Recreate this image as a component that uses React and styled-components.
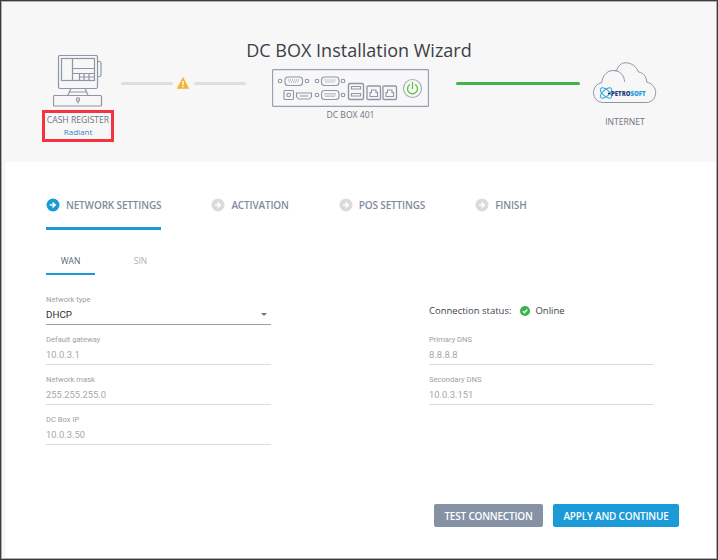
import React from "react";
import styled, { createGlobalStyle } from "styled-components";

const GlobalStyle = createGlobalStyle`
	html, body {
		margin: 0;
		padding: 0;
		background: #fff;
	}
	body {
		font-family: "Open Sans", "Liberation Sans", sans-serif;
	}
`;

const Frame = styled.div`
	box-sizing: border-box;
	width: 718px;
	height: 560px;
	border: 1px solid #3c3c3c;
	overflow: hidden;
`;

const Window = styled.div`
	box-sizing: border-box;
	height: 100%;
	border: 1px solid #adadad;
	display: flex;
	flex-direction: column;
	background: #f7f7f7;
`;

const Header = styled.header`
	height: 160px;
	flex: none;
`;

const Title = styled.h1`
	margin: 0;
	padding-top: 36px;
	font-size: 18px;
	line-height: 25px;
	font-weight: 400;
	color: #3a3f47;
	text-align: center;
`;

// the row of devices starts a little above the bottom of the title
const Devices = styled.div`
	display: flex;
	align-items: flex-start;
	margin-top: -8px;
	padding-left: 40px;
`;

const Device = styled.div`
	display: flex;
	flex-direction: column;
	align-items: center;
	flex: none;
	width: ${(p) => p.$width}px;
	margin-left: ${(p) => p.$left || 0}px;
	margin-top: ${(p) => p.$top || 0}px;
	svg {
		display: block;
		flex: none;
	}
`;

const DeviceName = styled.div`
	font-size: 8.6px;
	line-height: 12px;
	color: #6d7480;
	margin-top: ${(p) => p.$top || 0}px;
	white-space: nowrap;
`;

const SubName = styled.div`
	font-size: 8px;
	line-height: 12px;
	color: #3f82c0;
`;

const Highlight = styled.div`
	box-sizing: border-box;
	width: 72px;
	height: 32px;
	margin-top: 3px;
	border: 3px solid #f5333f;
	display: flex;
	flex-direction: column;
	align-items: center;
	justify-content: center;
`;

const LinkRow = styled.div`
	display: flex;
	align-items: center;
	flex: none;
	gap: 4px;
	width: ${(p) => p.$width}px;
	height: 12px;
	margin-left: ${(p) => p.$left}px;
	margin-top: 22px;
`;

const Line = styled.div`
	flex: 1;
	height: 3px;
	border-radius: 2px;
	background: ${(p) => p.$color};
`;

const WarnSlot = styled.span`
	display: flex;
	margin-right: 1px;
`;

const Body = styled.main`
	flex: 1;
	margin-left: 4px;
	padding: 0 37px 0 40px;
	background: #fff;
	display: flex;
	flex-direction: column;
`;

const Steps = styled.div`
	display: flex;
	gap: 50px;
`;

const Step = styled.div`
	display: flex;
	align-items: flex-start;
	gap: 6px;
	box-sizing: border-box;
	height: 68px;
	padding-top: 36px;
	border-bottom: 3px solid ${(p) => (p.$active ? "#1a9bd8" : "transparent")};
	svg {
		flex: none;
	}
`;

const StepLabel = styled.span`
	font-size: 10px;
	font-weight: 600;
	line-height: 14px;
	letter-spacing: -0.15px;
	color: #7f8b9c;
	white-space: nowrap;
`;

const Tabs = styled.div`
	display: flex;
	gap: 21px;
	margin-top: 24px;
`;

const Tab = styled.div`
	box-sizing: border-box;
	width: 49px;
	height: 21px;
	border-bottom: 2px solid ${(p) => (p.$active ? "#1a9bd8" : "transparent")};
	font-size: 8.5px;
	line-height: 14px;
	color: ${(p) => (p.$active ? "#5a626e" : "#a9b2bd")};
	text-align: center;
`;

const Columns = styled.div`
	display: grid;
	grid-template-columns: 225px 225px;
	column-gap: 158px;
	margin-top: 10px;
`;

const Field = styled.div`
	box-sizing: border-box;
	height: 40px;
	padding-top: 9px;
	border-bottom: 1px solid ${(p) => (p.$strong ? "#9aa0a8" : "#dcdcdc")};
	position: relative;
	font-family: Roboto, "Open Sans", sans-serif;
`;

const FieldLabel = styled.div`
	font-size: 7.6px;
	line-height: 12px;
	color: #a0a0a0;
`;

const FieldValue = styled.div`
	font-size: ${(p) => (p.$strong ? 9.8 : 9.4)}px;
	line-height: 16px;
	margin-top: 1px;
	color: ${(p) => (p.$strong ? "#2f2f2f" : "#a8a8a8")};
`;

const Arrow = styled.span`
	position: absolute;
	right: 4px;
	bottom: 8px;
	border: 3px solid transparent;
	border-top: 3px solid #777;
	border-bottom: 0;
`;

const Status = styled.div`
	box-sizing: border-box;
	display: flex;
	align-items: center;
	height: 40px;
	padding-top: 11px;
	font-size: 9.5px;
	color: #3d434c;
`;

const StatusValue = styled.span`
	display: flex;
	align-items: center;
	gap: 5px;
	margin-left: 9px;
`;

const Footer = styled.div`
	display: flex;
	justify-content: flex-end;
	gap: 10px;
	margin-top: auto;
	padding-bottom: 31px;
`;

const Button = styled.button`
	width: ${(p) => p.$width}px;
	height: 23px;
	padding: 0;
	border: 0;
	border-radius: 2px;
	font-family: inherit;
	font-size: 10px;
	font-weight: 600;
	letter-spacing: -0.2px;
	color: #fff;
	background: ${(p) => p.$color};
`;

const RegisterIcon = () => (
	<svg width="50" height="52" viewBox="0 0 50 52" fill="none" stroke="#8e97a8" strokeWidth="1.2">
		<rect x="5.5" y="0.5" width="39" height="33" rx="1.5" />
		<rect x="8.5" y="3.5" width="33" height="22" />
		<path d="M19.5 3.5v22M19.5 13.5h22M19.5 18.5h22M26.5 18.5v7M31 18.5v7M36 18.5v7M26.5 22h15" />
		<path d="M44.5 6.5h2a1.5 1.5 0 0 1 1.5 1.5v12a1.5 1.5 0 0 1-1.5 1.5h-2" />
		<path d="M18 33.5 15 40M32 33.5 35 40M17 37h16" />
		<rect x="0.5" y="40.5" width="48" height="10.5" rx="1" />
		<circle cx="25" cy="44.5" r="1.6" />
		<path d="M25 46v2.5" />
	</svg>
);

const WarningIcon = () => (
	<svg width="12" height="12" viewBox="0 0 12 12">
		<path d="M6 .5 11.8 11.5H.2Z" fill="#f5b335" stroke="#f5b335" strokeLinejoin="round" strokeWidth=".6" />
		<rect x="5.3" y="4" width="1.4" height="4.2" fill="#fff" />
		<rect x="5.3" y="9" width="1.4" height="1.4" fill="#fff" />
	</svg>
);

const Serial = ({ x, y = 8, h = 8.5 }) => (
	<rect x={x} y={y} width="17.5" height={h} rx="3" />
);

const Screw = ({ x, y }) => <circle cx={x} cy={y} r="1.8" />;

const Lan = ({ x }) => (
	<>
		<rect x={x} y="17" width="13.5" height="13.5" rx="1" strokeWidth="1.3" />
		<path d={`M${x + 3} 27.5v-4h1.5v-2.5h4.5v2.5h1.5v4z`} />
	</>
);

const BoxIcon = () => (
	<svg width="157" height="38" viewBox="0 0 157 38" fill="none" stroke="#8e97a8" strokeWidth="1.1">
		<rect x="0.5" y="0.5" width="156" height="37" rx="1.5" stroke="#98a1b2" strokeWidth="1.3" />
		<Screw x={8} y={12} />
		<Serial x={13} />
		<Screw x={35} y={12} />
		<path d="M16 11h11M17 13h9" strokeDasharray="1 1" />
		<Screw x={45} y={12} />
		<Serial x={49.5} />
		<Screw x={71} y={12} />
		<path d="M52.5 11h11M53.5 13h9" strokeDasharray="1 1" />
		<rect x="12" y="21.5" width="9.5" height="9" rx="1" />
		<circle cx="16.7" cy="26" r="1.8" />
		<path d="M24.5 24h15v3.5l-2 2.5h-11l-2-2.5zM28 27h8" />
		<Screw x={45} y={26} />
		<Serial x={49.5} y={21.5} h={9} />
		<Screw x={71} y={26} />
		<path d="M52.5 24.5h11M52.5 26h11M53.5 27.5h9" strokeDasharray="1 1" />
		<rect x="76.5" y="14.5" width="15" height="16" rx="1.5" strokeWidth="1.4" />
		<path d="M79.5 17.5h9v2.5h-9zM79.5 24.5h9v2.5h-9z" />
		<Lan x={95} />
		<Lan x={111} />
		<circle cx="140.5" cy="19.5" r="9" stroke="#a7adb9" strokeWidth="1.2" />
		<path d="M137.5 15.8a5 5 0 1 0 6 0M140.5 13.5v6" stroke="#5cc43a" strokeWidth="1.3" strokeLinecap="round" />
	</svg>
);

const CloudIcon = () => (
	<svg width="64" height="42" viewBox="0 0 64 42" fill="none">
		<path
			d="M10.5 40.5C4.5 40.5.5 36 .5 30.5C.5 25.5 4 21.5 8.7 20.7C9.5 13.5 14 8.5 20.5 8.5C21.5 8.5 22.5 8.6 23.5 9C25 3.8 28 .8 32.5 .8C38.5 .8 43.5 4.5 45.5 10C50.5 10.5 53.5 15 53.8 20C59 21.5 62.7 25.5 62.7 30.5C62.7 36.5 58.5 40.5 53.5 40.5ZM20.5 8.5C27 8.5 31.5 13.5 31.5 20"
			stroke="#8e97a8"
			strokeWidth="1"
		/>
		<ellipse cx="13" cy="31" rx="7" ry="3.2" transform="rotate(40 13 31)" stroke="#2aa6e0" strokeWidth="1" />
		<ellipse cx="13" cy="31" rx="7" ry="3.2" transform="rotate(-40 13 31)" stroke="#2aa6e0" strokeWidth="1" />
		<circle cx="16" cy="31.5" r="1" fill="#1c2b4a" />
		<text x="18" y="34" fontFamily="Open Sans, sans-serif" fontSize="6" fontWeight="800" fill="#1c3f7a">
			PETRO<tspan fill="#1a9bd8">SOFT</tspan>
		</text>
	</svg>
);

const StepIcon = ({ active }) => (
	<svg width="14" height="14" viewBox="0 0 14 14">
		<circle cx="7" cy="7" r="6.5" fill={active ? "#1a9bd8" : "#d8dadd"} />
		<path d="M3.8 7h5M6.5 4.5 9.2 7l-2.7 2.5" fill="none" stroke="#fff" strokeWidth="1.5" />
	</svg>
);

const OnlineIcon = () => (
	<svg width="10" height="10" viewBox="0 0 10 10">
		<circle cx="5" cy="5" r="5" fill="#34b44a" />
		<path d="M2.8 5.1 4.4 6.7 7.3 3.5" fill="none" stroke="#fff" strokeWidth="1.3" />
	</svg>
);

const steps = ["NETWORK SETTINGS", "ACTIVATION", "POS SETTINGS", "FINISH"];

const App = () => (
	<>
		<GlobalStyle />
		<Frame>
			<Window>
				<Header>
					<Title>DC BOX Installation Wizard</Title>
					<Devices>
						<Device $width={72}>
							<RegisterIcon />
							<Highlight>
								<DeviceName>CASH REGISTER</DeviceName>
								<SubName>Radiant</SubName>
							</Highlight>
						</Device>
						<LinkRow $width={125} $left={7}>
							<Line $color="#dcdee1" />
							<WarnSlot>
								<WarningIcon />
							</WarnSlot>
							<Line $color="#dcdee1" />
						</LinkRow>
						<Device $width={157} $left={26} $top={14}>
							<BoxIcon />
							<DeviceName $top={2}>DC BOX 401</DeviceName>
						</Device>
						<LinkRow $width={124} $left={27}>
							<Line $color="#3fb54a" />
						</LinkRow>
						<Device $width={64} $left={13} $top={7}>
							<CloudIcon />
							<DeviceName $top={12}>INTERNET</DeviceName>
						</Device>
					</Devices>
				</Header>
				<Body>
					<Steps>
						{steps.map((s, i) => (
							<Step key={s} $active={i === 0}>
								<StepIcon active={i === 0} />
								<StepLabel>{s}</StepLabel>
							</Step>
						))}
					</Steps>
					<Tabs>
						<Tab $active>WAN</Tab>
						<Tab>SIN</Tab>
					</Tabs>
					<Columns>
						<div>
							<Field $strong>
								<FieldLabel>Network type</FieldLabel>
								<FieldValue $strong>DHCP</FieldValue>
								<Arrow />
							</Field>
							<Field>
								<FieldLabel>Default gateway</FieldLabel>
								<FieldValue>10.0.3.1</FieldValue>
							</Field>
							<Field>
								<FieldLabel>Network mask</FieldLabel>
								<FieldValue>255.255.255.0</FieldValue>
							</Field>
							<Field>
								<FieldLabel>DC Box IP</FieldLabel>
								<FieldValue>10.0.3.50</FieldValue>
							</Field>
						</div>
						<div>
							<Status>
								Connection status:
								<StatusValue>
									<OnlineIcon />
									Online
								</StatusValue>
							</Status>
							<Field>
								<FieldLabel>Primary DNS</FieldLabel>
								<FieldValue>8.8.8.8</FieldValue>
							</Field>
							<Field>
								<FieldLabel>Secondary DNS</FieldLabel>
								<FieldValue>10.0.3.151</FieldValue>
							</Field>
						</div>
					</Columns>
					<Footer>
						<Button $width={109} $color="#8592a6">TEST CONNECTION</Button>
						<Button $width={126} $color="#1a9bd8">APPLY AND CONTINUE</Button>
					</Footer>
				</Body>
			</Window>
		</Frame>
	</>
);

export default App;
